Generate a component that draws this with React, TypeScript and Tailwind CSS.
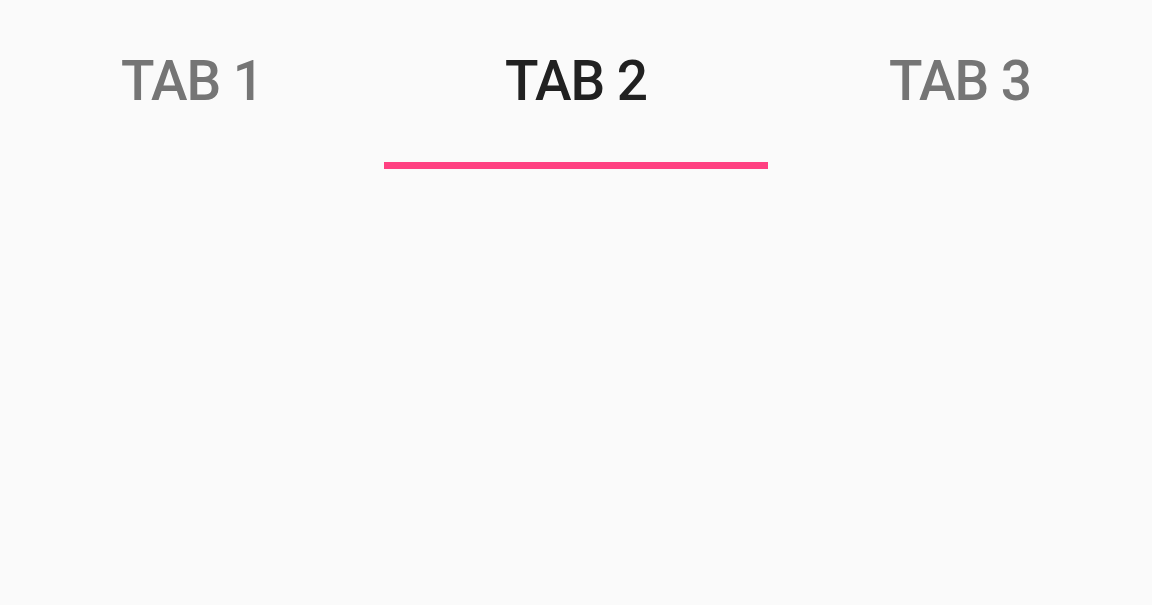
import React from "react";

const tabs = ["TAB 1", "TAB 2", "TAB 3"];

export default function App() {
  const selected = 1;
  return (
    <div className="w-[1152px] h-[605px] bg-[#fafafa] font-['Roboto',sans-serif]">
      <div className="flex">
        {tabs.map((label, i) => (
          <div key={label} className="flex-1 flex flex-col items-center">
            <span
              className={
                "pt-[54px] text-[55px] leading-[55px] font-medium tracking-[-1px] " +
                (i === selected ? "text-[#212121]" : "text-[#757575]")
              }
            >
              {label}
            </span>
            <div
              className={
                "mt-[53px] h-[7px] w-full " +
                (i === selected ? "bg-[#ff4081]" : "bg-transparent")
              }
            />
          </div>
        ))}
      </div>
    </div>
  );
}
